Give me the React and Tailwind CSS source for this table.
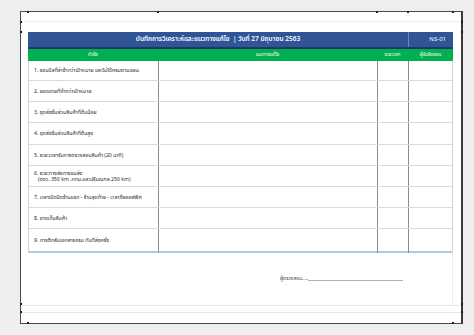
import React from 'react';

const rows = [
  { h: 'h-[20px]', text: ['1. รอบบิลที่ล่าช้ากว่าเป้าหมาย และไม่ได้ครบตามแผน'] },
  { h: 'h-[21px]', text: ['2. ยอดขายที่ต่ำกว่าเป้าหมาย'] },
  { h: 'h-[21px]', text: ['3. ชุดส่งชิ้นส่วนสินค้าที่ต้นน้อย'] },
  { h: 'h-[22px]', text: ['4. ชุดส่งชิ้นส่วนสินค้าที่ต้นสูง'] },
  { h: 'h-[21px]', text: ['5. ระยะเวลารับการตรวจสอบสินค้า (20 นาที)'] },
  { h: 'h-[21px]', text: ['6. ระยะทางส่งการขนส่ง', '(ตจว. 350 km ,กทม.และปริมณฑล 250 km)'] },
  { h: 'h-[21px]', text: ['7. เวลาเปิดปิดร้านแรก - ร้านสุดท้าย - เวลาถึงออฟฟิศ'] },
  { h: 'h-[21px]', text: ['8. ขาดเก็บสินค้า'] },
  { h: 'h-[22px]', text: ['9. การตีกลับเอกสารครบ ทันที่ส่งครั้ง'] },
];

const thai = "font-['Tahoma','Noto_Sans_Thai','Noto_Sans','DejaVu_Sans',sans-serif]";

const Mark = ({ className }) => (
  <div className={`absolute bg-[#1a1a1a] ${className}`} />
);

export default function App() {
  return (
    <div className={`w-[474px] h-[335px] bg-[#efefef] pl-[20px] pt-[11px] ${thai}`}>
      <div className="relative w-[443px] h-[313px] bg-white border border-[#4a4a4a] border-r-2 border-r-[#3a3a3a] flex flex-col">
        {/* handles on the page edge */}
        <Mark className="top-[-1px] left-[6px] w-[2px] h-[2px]" />
        <Mark className="top-[-1px] left-[136px] w-[2px] h-[2px]" />
        <Mark className="top-[-1px] left-[355px] w-[2px] h-[2px]" />
        <Mark className="top-[-1px] left-[386px] w-[2px] h-[2px]" />
        <Mark className="top-[-1px] left-[431px] w-[2px] h-[2px]" />
        <Mark className="top-[9px] left-[-1px] w-[2px] h-[2px]" />
        <Mark className="top-[19px] left-[-1px] w-[2px] h-[2px]" />
        <Mark className="top-[9px] right-[-2px] w-[2px] h-[2px]" />
        <Mark className="top-[19px] right-[-2px] w-[2px] h-[2px]" />
        <Mark className="top-[291px] left-[-1px] w-[2px] h-[2px]" />
        <Mark className="top-[299px] left-[-1px] w-[2px] h-[2px]" />
        <Mark className="top-[291px] right-[-2px] w-[2px] h-[2px]" />
        <Mark className="top-[299px] right-[-2px] w-[2px] h-[2px]" />
        <Mark className="bottom-[-1px] left-[6px] w-[2px] h-[2px]" />
        <Mark className="bottom-[-1px] left-[431px] w-[2px] h-[2px]" />

        <div className="h-[20px] shrink-0">
          <div className="h-[10px] border-b border-[#ececec]" />
        </div>

        <div className="ml-[7px] w-[425px] shrink-0">
          {/* title bar */}
          <div className="flex h-[15px] bg-[#2f5597]">
            <div className="w-[380px] flex items-center justify-center text-white text-[6.5px] font-semibold leading-none">
              บันทึกการวิเคราะห์และแนวทางแก้ไข&nbsp;&nbsp;|&nbsp;วันที่ 27 มิถุนายน 2563
            </div>
            <div className="w-[45px] border-l border-[#6a86b8] flex items-center justify-end pr-[7px] text-white text-[6px] leading-none">
              NS-01
            </div>
          </div>
          <div className="h-[2px] bg-[#1f3864]" />
          {/* column headings */}
          <div className="grid grid-cols-[130px_219px_31px_45px] h-[12px] bg-[#00b050] text-white text-[4.5px] leading-none">
            <div className="flex items-center justify-center">หัวข้อ</div>
            <div className="flex items-center justify-center">แนวทางแก้ไข</div>
            <div className="flex items-center justify-center">ระยะเวลา</div>
            <div className="flex items-center justify-center">ผู้รับผิดชอบ</div>
          </div>
          {/* rows */}
          <div className="border-x border-[#d4d4d4]">
            {rows.map((r, i) => (
              <div
                key={i}
                className={`grid grid-cols-[129px_219px_31px_44px] ${r.h} ${i < rows.length - 1 ? 'border-b border-[#d9d9d9]' : ''}`}
              >
                <div className="flex flex-col justify-center pl-[5px] text-[5.2px] leading-[6.5px] text-[#2a2a2a] whitespace-nowrap">
                  <span>{r.text[0]}</span>
                  {r.text[1] && <span className="pl-[4px]">{r.text[1]}</span>}
                </div>
                <div className="border-l border-[#8a8a8a]" />
                <div className="border-l border-[#8a8a8a]" />
                <div className="border-l border-[#8a8a8a]" />
              </div>
            ))}
            <div className="grid grid-cols-[129px_219px_31px_44px] h-[2px] bg-[#b4c6e7]">
              <div className="border-l border-transparent" />
              <div className="border-l border-[#a0a8b8]" />
              <div className="border-l border-[#8a8a8a]" />
              <div className="border-l border-[#8a8a8a]" />
            </div>
          </div>
        </div>

        {/* signature area */}
        <div className="flex-1 ml-[7px] w-[425px] border-r border-[#ececec] flex items-start pt-[24px] pl-[252px]">
          <span className="text-[4.8px] leading-none text-[#444]">ผู้ตรวจสอบ.....</span>
          <div className="w-[95px] mt-[3px] border-b border-[#b0b0b0]" />
        </div>

        <div className="h-[7px] border-t border-[#e6e6e6] shrink-0" />
        <div className="h-[11px] border-t border-[#e6e6e6] shrink-0" />
      </div>
    </div>
  );
}
